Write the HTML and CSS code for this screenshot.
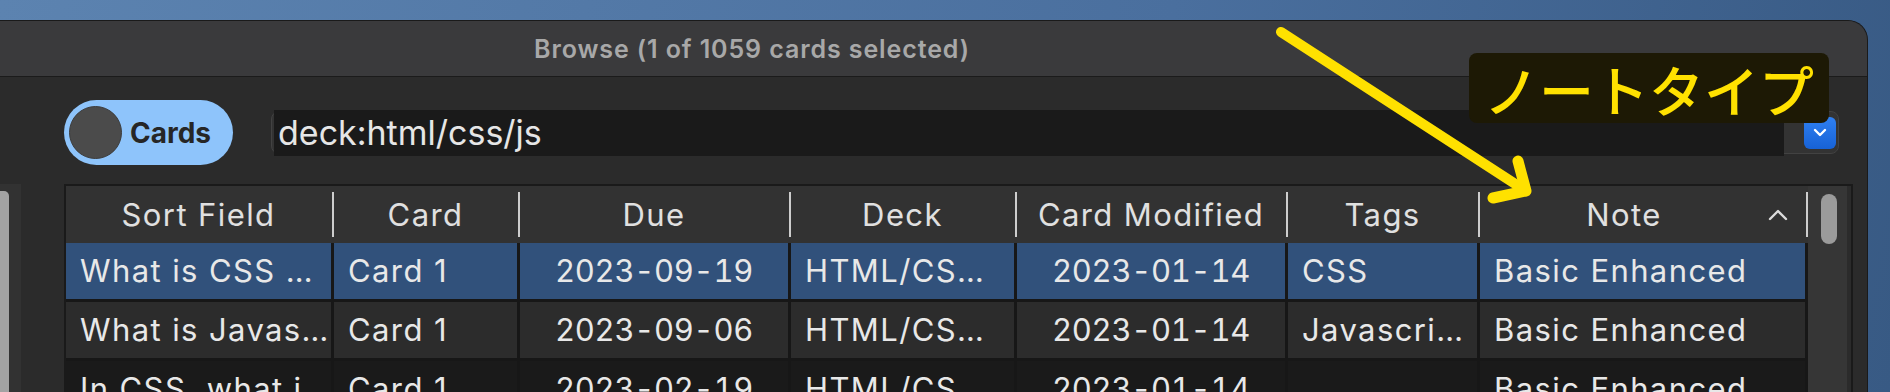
FILE: index.html
```html
<!DOCTYPE html>
<html lang="en">
<head>
    <meta charset="UTF-8">
    <title>Browse</title>
    <link rel="stylesheet" href="styles.css">
</head>
<body>
    <div class="window">
        <!-- Title bar -->
        <div class="titlebar">Browse (1 of 1059 cards selected)</div>

        <div class="content">
            <!-- Toolbar: mode switch + search -->
            <div class="toolbar">
                <div class="switch">
                    <span class="knob"></span>
                    <span class="switch-label">Cards</span>
                </div>
                <div class="combo">
                    <div class="search">deck:html/css/js</div>
                    <button class="combo-btn" aria-label="History">
                        <svg width="14" height="9" viewBox="0 0 14 9"><polyline points="2,2 7,7 12,2" fill="none" stroke="#fff" stroke-width="2.4" stroke-linecap="round" stroke-linejoin="round"/></svg>
                    </button>
                </div>
            </div>

            <!-- Sidebar edge + card table -->
            <div class="main">
                <div class="sidebar"><div class="sidebar-bar"></div></div>
                <div class="table">
                    <div class="cols">
                        <div class="head">
                            <div class="hcell">Sort Field</div>
                            <div class="hcell">Card</div>
                            <div class="hcell">Due</div>
                            <div class="hcell">Deck</div>
                            <div class="hcell">Card Modified</div>
                            <div class="hcell">Tags</div>
                            <div class="hcell sorted">
                                <span class="htext">Note</span>
                                <svg class="sort-icon" width="20" height="12" viewBox="0 0 20 12"><polyline points="2,10 10,2 18,10" fill="none" stroke="#dcdcdc" stroke-width="2.4" stroke-linecap="round" stroke-linejoin="round"/></svg>
                            </div>
                        </div>

                        <div class="row selected">
                            <div class="cell">What is CSS …</div>
                            <div class="cell">Card 1</div>
                            <div class="cell date">2023-09-19</div>
                            <div class="cell">HTML/CS…</div>
                            <div class="cell date">2023-01-14</div>
                            <div class="cell">CSS</div>
                            <div class="cell">Basic Enhanced</div>
                        </div>
                        <div class="row">
                            <div class="cell">What is Javas…</div>
                            <div class="cell">Card 1</div>
                            <div class="cell date">2023-09-06</div>
                            <div class="cell">HTML/CS…</div>
                            <div class="cell date">2023-01-14</div>
                            <div class="cell">Javascri…</div>
                            <div class="cell">Basic Enhanced</div>
                        </div>
                        <div class="row alt">
                            <div class="cell">In CSS, what i…</div>
                            <div class="cell">Card 1</div>
                            <div class="cell date">2023-02-19</div>
                            <div class="cell">HTML/CS…</div>
                            <div class="cell date">2023-01-14</div>
                            <div class="cell"></div>
                            <div class="cell">Basic Enhanced</div>
                        </div>
                    </div>
                    <div class="vscroll"><div class="thumb"></div></div>
                </div>
            </div>
        </div>
    </div>

    <!-- Callout label and arrow pointing at the Note column -->
    <div class="callout">ノートタイプ</div>
    <svg class="pointer" width="1890" height="392" viewBox="0 0 1890 392">
        <g fill="none" stroke="#ffe100" stroke-linecap="round" stroke-linejoin="round">
            <line x1="1281" y1="32" x2="1523" y2="189" stroke-width="10"/>
            <polyline points="1518,161 1526,191 1493,198" stroke-width="11"/>
        </g>
    </svg>
</body>
</html>
```

FILE: styles.css
```css
/* Desktop + window frame */
body {
    margin: 0;
    width: 1890px;
    height: 392px;
    overflow: hidden;
    position: relative;
    font-family: "Inter", "Noto Sans", sans-serif;
    background: linear-gradient(100deg, #5c83b0 0%, #4a6f9e 60%, #385a84 100%);
}

.window {
    margin: 20px 22px 0 0;
    height: 380px;
    background: #2b2b2b;
    border: 1px solid #1a1a1a;
    border-left: none;
    border-top-right-radius: 20px;
    overflow: hidden;
}

.titlebar {
    height: 55px;
    display: flex;
    align-items: center;
    padding-left: 534px;
    background: #3a3a3c;
    border-bottom: 1px solid #1b1b1b;
    color: #a8a8a8;
    font-size: 25px;
    font-weight: 600;
    letter-spacing: 0.9px;
}

.content {
    padding-top: 23px;
}

/* Toolbar */
.toolbar {
    display: flex;
    align-items: center;
    height: 65px;
    padding: 0 28px 0 64px;
}

.switch {
    width: 169px;
    height: 65px;
    box-sizing: border-box;
    display: flex;
    align-items: center;
    gap: 8px;
    padding-left: 5px;
    border-radius: 33px;
    background: #8ec4fb;
}

.knob {
    width: 53px;
    height: 53px;
    box-sizing: border-box;
    border-radius: 50%;
    background: #4b4b4b;
    border: 1px solid #3c3c3c;
}

.switch-label {
    font-size: 28px;
    font-weight: 700;
    color: #262626;
}

.combo {
    flex: 1;
    margin-left: 38px;
    height: 41px;
    display: flex;
    align-items: center;
    background: #333333;
    border: 1px solid #424242;
    border-radius: 8px;
}

.search {
    flex: 1;
    height: 46px;
    margin-left: 2px;
    padding-left: 4px;
    line-height: 46px;
    background: #1a1a1a;
    color: #e6e6e6;
    font-size: 34px;
}

.combo-btn {
    width: 32px;
    height: 32px;
    margin: 0 2px 0 20px;
    padding: 0;
    border: none;
    border-radius: 6px;
    background: linear-gradient(#2f80f2, #1762d6);
    display: flex;
    align-items: center;
    justify-content: center;
}

/* Sidebar edge and table */
.main {
    display: flex;
    margin-top: 19px;
    height: 220px;
}

.sidebar {
    width: 21px;
    padding-top: 7px;
    background: #323232;
}

.sidebar-bar {
    width: 9px;
    height: 100%;
    background: #a3a3a3;
    border-top-right-radius: 5px;
}

.table {
    display: flex;
    margin-left: 43px;
    width: 1785px;
    border: 2px solid #1a1a1a;
    border-bottom: none;
}

.cols {
    width: 1742px;
    background: #171717;
}

.head,
.row {
    display: grid;
    grid-template-columns: 265px 183px 268px 223px 268px 189px 325px;
    column-gap: 3px;
}

.head {
    height: 57px;
    background: #323232;
}

.hcell {
    position: relative;
    display: flex;
    align-items: center;
    justify-content: center;
    color: #e0e0e0;
    font-size: 31px;
    letter-spacing: 1.4px;
    white-space: nowrap;
}

/* column divider drawn in the gap to the right of each header */
.hcell::after {
    content: "";
    position: absolute;
    right: -3px;
    top: 6px;
    bottom: 6px;
    width: 2px;
    background: #cdcdcd;
}

.hcell.sorted .htext {
    flex: 1;
    text-align: center;
}

.sort-icon {
    margin-right: 17px;
}

.row {
    height: 56px;
    margin-top: 3px;
}

.head + .row {
    margin-top: 0;
}

.cell {
    padding: 0 14px;
    line-height: 56px;
    font-size: 31px;
    letter-spacing: 1.4px;
    color: #e8e8e8;
    white-space: nowrap;
    overflow: hidden;
    background: #2c2c2c;
}

.cell.date {
    text-align: center;
    font-variant-numeric: tabular-nums;
    letter-spacing: -0.3px;
}

.row.selected .cell {
    background: #31517b;
}

.row.alt .cell {
    background: #1a1a1a;
}

.vscroll {
    width: 39px;
    padding: 8px 0 0 13px;
    box-sizing: border-box;
    background: #363636;
}

.thumb {
    width: 16px;
    height: 50px;
    border-radius: 8px;
    background: #9b9b9b;
}

/* Annotation overlay */
.callout {
    position: absolute;
    left: 1469px;
    top: 53px;
    width: 360px;
    height: 70px;
    box-sizing: border-box;
    padding-left: 15px;
    line-height: 70px;
    border-radius: 8px;
    background: #1d1905;
    color: #ffe100;
    font-family: "Noto Sans CJK JP", sans-serif;
    font-size: 55px;
    font-weight: 500;
    white-space: nowrap;
}

.pointer {
    position: absolute;
    left: 0;
    top: 0;
    pointer-events: none;
}
```
